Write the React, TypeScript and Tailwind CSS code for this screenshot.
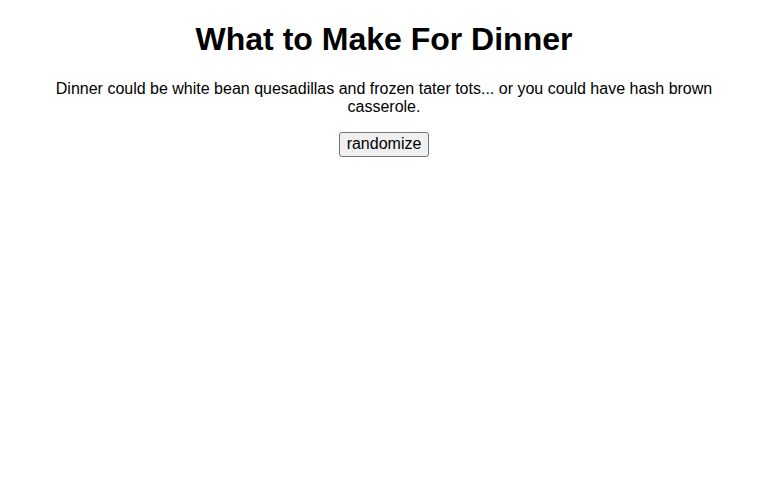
export default function App() {
  return (
    <div className="min-h-[480px] bg-white text-black text-center px-[40px]" style={{ fontFamily: '"Liberation Sans", Arial, sans-serif' }}>
      <div className="pt-[21px]">
        <h1 className="text-[32px] font-bold leading-[37px]">What to Make For Dinner</h1>
        <p className="mt-[22px] text-[16px] leading-[18.4px]">
          Dinner could be white bean quesadillas and frozen tater tots... or you could have hash brown casserole.
        </p>
        <div className="mt-[15px]">
          <button className="text-[16px] leading-[18px] px-[7px] py-[2.5px] bg-[#efefef] border border-[#767676] rounded-[3px] text-black">
            randomize
          </button>
        </div>
      </div>
    </div>
  );
}
